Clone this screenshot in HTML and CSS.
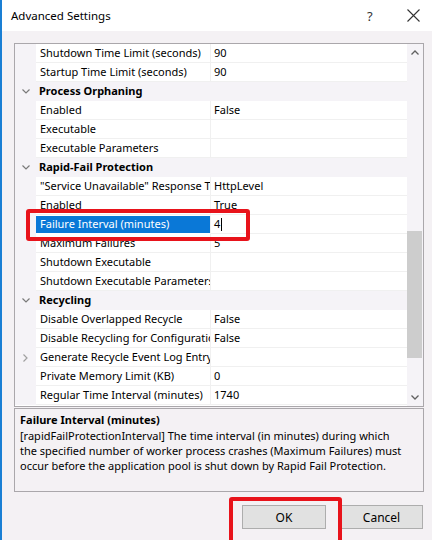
FILE: index.html
```html
<!DOCTYPE html>
<html>
<head>
<meta charset="utf-8">
<link rel="stylesheet" href="styles.css">
</head>
<body>
<div class="window">
  <div class="titlebar">
    <span class="title">Advanced Settings</span>
    <span class="help">?</span>
    <span class="close"><svg width="13" height="13" viewBox="0 0 13 13"><path d="M0.5 0.5 L12.5 12.5 M12.5 0.5 L0.5 12.5" stroke="#333" stroke-width="1.1" fill="none"/></svg></span>
  </div>
  <div class="content">
    <div class="grid">
      <div class="rows">
        <div class="row"><div class="gut"></div><div class="name">Shutdown Time Limit (seconds)</div><div class="val">90</div></div>
        <div class="row"><div class="gut"></div><div class="name">Startup Time Limit (seconds)</div><div class="val">90</div></div>
        <div class="row cat"><div class="gut"><svg class="chev" width="8" height="5" viewBox="0 0 8 5"><path d="M0.5 0.5 L4 4 L7.5 0.5" stroke="#7a7a7a" stroke-width="1.2" fill="none"/></svg></div><div class="catname">Process Orphaning</div></div>
        <div class="row"><div class="gut"></div><div class="name">Enabled</div><div class="val">False</div></div>
        <div class="row"><div class="gut"></div><div class="name">Executable</div><div class="val"></div></div>
        <div class="row"><div class="gut"></div><div class="name">Executable Parameters</div><div class="val"></div></div>
        <div class="row cat"><div class="gut"><svg class="chev" width="8" height="5" viewBox="0 0 8 5"><path d="M0.5 0.5 L4 4 L7.5 0.5" stroke="#7a7a7a" stroke-width="1.2" fill="none"/></svg></div><div class="catname">Rapid-Fail Protection</div></div>
        <div class="row"><div class="gut"></div><div class="name">"Service Unavailable" Response Type</div><div class="val">HttpLevel</div></div>
        <div class="row"><div class="gut"></div><div class="name">Enabled</div><div class="val">True</div></div>
        <div class="row sel"><div class="gut"></div><div class="name">Failure Interval (minutes)</div><div class="val"><span>4</span><span class="caret"></span></div></div>
        <div class="row"><div class="gut"></div><div class="name">Maximum Failures</div><div class="val">5</div></div>
        <div class="row"><div class="gut"></div><div class="name">Shutdown Executable</div><div class="val"></div></div>
        <div class="row"><div class="gut"></div><div class="name">Shutdown Executable Parameters</div><div class="val"></div></div>
        <div class="row cat"><div class="gut"><svg class="chev" width="8" height="5" viewBox="0 0 8 5"><path d="M0.5 0.5 L4 4 L7.5 0.5" stroke="#7a7a7a" stroke-width="1.2" fill="none"/></svg></div><div class="catname">Recycling</div></div>
        <div class="row"><div class="gut"></div><div class="name">Disable Overlapped Recycle</div><div class="val">False</div></div>
        <div class="row"><div class="gut"></div><div class="name">Disable Recycling for Configuration Changes</div><div class="val">False</div></div>
        <div class="row"><div class="gut"><svg class="chev" width="5" height="8" viewBox="0 0 5 8"><path d="M0.5 0.5 L4 4 L0.5 7.5" stroke="#a0a0a0" stroke-width="1.2" fill="none"/></svg></div><div class="name">Generate Recycle Event Log Entry</div><div class="val"></div></div>
        <div class="row"><div class="gut"></div><div class="name">Private Memory Limit (KB)</div><div class="val">0</div></div>
        <div class="row"><div class="gut"></div><div class="name">Regular Time Interval (minutes)</div><div class="val">1740</div></div>
      </div>
      <div class="scrollbar">
        <div class="arrow"><svg width="8" height="5" viewBox="0 0 8 5"><path d="M0.5 4.5 L4 1 L7.5 4.5" stroke="#606060" stroke-width="1.3" fill="none"/></svg></div>
        <div class="track"><div class="thumb"></div></div>
        <div class="arrow"><svg width="8" height="5" viewBox="0 0 8 5"><path d="M0.5 0.5 L4 4 L7.5 0.5" stroke="#606060" stroke-width="1.3" fill="none"/></svg></div>
      </div>
    </div>
    <div class="desc">
      <div class="desc-title">Failure Interval (minutes)</div>
      <div class="desc-text">[rapidFailProtectionInterval] The time interval (in minutes) during which the specified number of worker process crashes (Maximum Failures) must occur before the application pool is shut down by Rapid Fail Protection.</div>
    </div>
    <div class="buttons">
      <button class="btn ok">OK</button>
      <button class="btn">Cancel</button>
    </div>
  </div>
  <div class="mark mark-row"></div>
  <div class="mark mark-ok"></div>
</div>
</body>
</html>
```

FILE: styles.css
```css
html, body {
  margin: 0;
  padding: 0;
  width: 432px;
  height: 540px;
  overflow: hidden;
}
body {
  font-family: "Noto Sans", "Open Sans", sans-serif;
  font-size: 11px;
  color: #000;
  background: #f4f1f4;
}
.window {
  position: relative;
  width: 430px;
  height: 540px;
  border-left: 2px solid #1a7fd4;
  background: #f4f1f4;
  overflow: hidden;
}
.titlebar {
  height: 31px;
  background: #fff;
  display: flex;
  align-items: center;
  font-size: 11.5px;
}
.title {
  padding-left: 9px;
  flex: 1;
  color: #000;
}
.help {
  width: 14px;
  margin-right: 26px;
  color: #333;
  font-size: 13px;
}
.close {
  display: flex;
  width: 13px;
  margin-right: 12px;
}
.content {
  padding: 12px 8px 0 12px;
}
.grid {
  height: 362px;
  border: 1px solid #aaa7ab;
  background: #fff;
  display: flex;
  overflow: hidden;
}
.rows {
  flex: 1;
  display: flex;
  flex-direction: column;
}
.row {
  height: 19px;
  flex: none;
  display: flex;
  line-height: 18px;
}
.gut {
  width: 21px;
  flex: none;
  background: #f5f3f7;
  display: flex;
  align-items: center;
  justify-content: center;
}
.name {
  width: 170px;
  flex: none;
  padding-left: 4px;
  border-bottom: 1px solid #f0f0f0;
  border-right: 1px solid #f0f0f0;
  white-space: nowrap;
  overflow: hidden;
}
.val {
  flex: 1;
  padding-left: 3px;
  border-bottom: 1px solid #f0f0f0;
  white-space: nowrap;
  display: flex;
  align-items: center;
}
.cat {
  background: #f5f3f7;
}
.catname {
  flex: 1;
  padding-left: 3px;
  font-weight: bold;
  border-bottom: 1px solid #f5f3f7;
}
.sel .name {
  background: #0a78d7;
  color: #fff;
  border-bottom: 1px solid #fff;
  border-top: 1px solid #fff;
  line-height: 16px;
  height: 17px;
}
.caret {
  display: inline-block;
  width: 1px;
  height: 13px;
  background: #000;
  margin-left: 1px;
}
.scrollbar {
  width: 16px;
  flex: none;
  background: #f5f3f7;
  display: flex;
  flex-direction: column;
}
.arrow {
  height: 17px;
  display: flex;
  align-items: center;
  justify-content: center;
}
.track {
  flex: 1;
  padding-top: 170px;
}
.thumb {
  width: 15px;
  height: 127px;
  background: #cdcdcd;
}
.desc {
  margin-top: 1px;
  height: 80px;
  border: 1px solid #aaa7ab;
  padding: 2px 5px 0 5px;
}
.desc-title {
  font-weight: bold;
  line-height: 17px;
}
.desc-text {
  line-height: 15px;
  max-width: 386px;
}
.buttons {
  display: flex;
  justify-content: flex-end;
  gap: 14px;
  margin-top: 13px;
  padding-right: 1px;
}
.btn {
  width: 83px;
  height: 24px;
  background: #e1e1e1;
  border: 1px solid #adadad;
  font-family: inherit;
  font-size: 12px;
  color: #000;
  padding: 0;
}
.btn.ok {
  width: 84px;
}
.mark {
  position: absolute;
  border: 4px solid #e8131b;
  border-radius: 3px;
  box-sizing: border-box;
}
.mark-row {
  left: 24px;
  top: 209px;
  width: 224px;
  height: 32px;
}
.mark-ok {
  left: 227px;
  top: 497px;
  width: 113px;
  height: 52px;
}
```
